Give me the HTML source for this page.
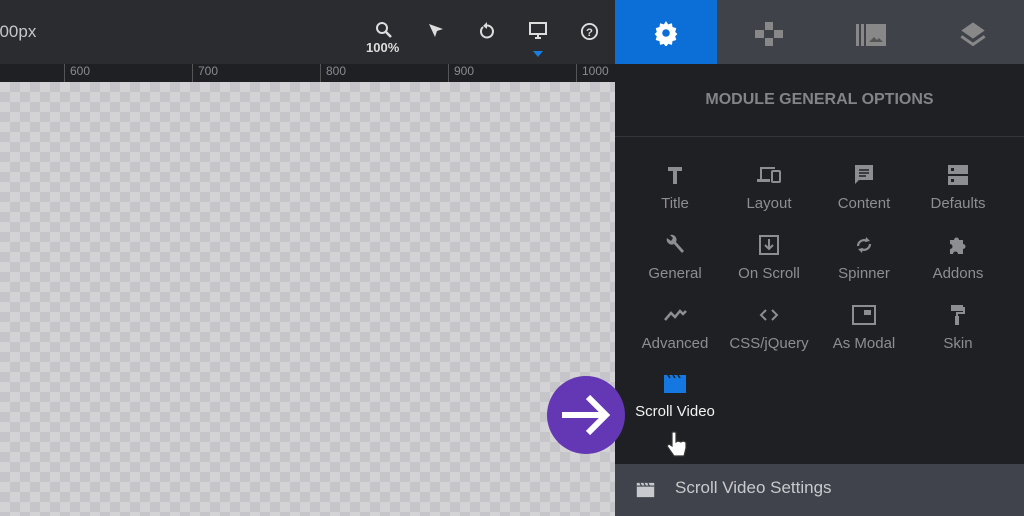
<!DOCTYPE html><html><head><style>
*{margin:0;padding:0;box-sizing:border-box}
body{width:1024px;height:516px;overflow:hidden;background:#1f2023;font-family:"Liberation Sans",sans-serif;position:relative}
.a{position:absolute}
.top{left:0;top:0;width:615px;height:64px;background:#2b2c30}
.ruler{left:0;top:64px;width:615px;height:18px;background:#1f2023;color:#8a8a8e;font-size:12px}
.canvas{left:0;top:82px;width:615px;height:434px;background-color:#d3d3d6;background-image:linear-gradient(45deg,#c6c6ca 25%,transparent 25%,transparent 75%,#c6c6ca 75%),linear-gradient(45deg,#c6c6ca 25%,transparent 25%,transparent 75%,#c6c6ca 75%);background-size:20px 20px;background-position:0 0,10px 10px}
.tabs{left:615px;top:0;width:409px;height:64px;background:#3f4249}
.panel{left:615px;top:64px;width:409px;height:400px;background:#1f2023}
.it{width:94px;text-align:center;color:#8d8e92;font-size:15px}
.it svg{display:block;margin:0 auto 9px}
.bot{left:615px;top:464px;width:409px;height:52px;background:#40434b;color:#c9cacd;font-size:17px}
</style></head><body>
<div class="a top">
 <div class="a" style="left:-10px;top:22px;color:#c7c7ca;font-size:17px">900px</div>
 <svg class="a" style="left:374px;top:20px" width="20" height="20" viewBox="0 0 20 20"><circle cx="8" cy="8" r="5" stroke="#ddd" stroke-width="2" fill="none"/><path d="M12 12l5 5" stroke="#ddd" stroke-width="2.5"/></svg>
 <div class="a" style="left:366px;top:40px;color:#ddd;font-size:13px;font-weight:bold">100%</div>
 <svg class="a" style="left:427px;top:22px" width="18" height="18" viewBox="0 0 18 18"><path d="M2 2l14 5-6 2-2 6z" fill="#ddd"/></svg>
 <svg class="a" style="left:478px;top:22px" width="18" height="18" viewBox="0 0 18 18"><path d="M5 5a6 6 0 1 0 4-1.5" stroke="#ddd" stroke-width="2" fill="none"/><path d="M9 0v7l-4-3z" fill="#ddd"/></svg>
 <svg class="a" style="left:528px;top:21px" width="20" height="20" viewBox="0 0 20 20"><rect x="2" y="2" width="16" height="11" stroke="#ddd" stroke-width="2" fill="none"/><path d="M7 17h6M10 13v4" stroke="#ddd" stroke-width="2"/></svg>
 <div class="a" style="left:533px;top:51px;border:5px solid transparent;border-top:6px solid #1a7ee0"></div>
 <svg class="a" style="left:580px;top:22px" width="19" height="19" viewBox="0 0 20 20"><circle cx="10" cy="10" r="8" stroke="#ddd" stroke-width="2" fill="none"/><text x="10" y="14.5" font-size="12" font-weight="bold" text-anchor="middle" fill="#ddd" font-family="Liberation Sans">?</text></svg>
</div>
<div class="a ruler">
 <div class="a" style="left:64px;top:0;height:18px;border-left:1px solid #555;padding-left:5px">600</div>
 <div class="a" style="left:192px;top:0;height:18px;border-left:1px solid #555;padding-left:5px">700</div>
 <div class="a" style="left:320px;top:0;height:18px;border-left:1px solid #555;padding-left:5px">800</div>
 <div class="a" style="left:448px;top:0;height:18px;border-left:1px solid #555;padding-left:5px">900</div>
 <div class="a" style="left:576px;top:0;height:18px;border-left:1px solid #555;padding-left:5px">1000</div>
</div>
<div class="a canvas"></div>
<div class="a tabs">
 <div class="a" style="left:0;top:0;width:102px;height:64px;background:#0b6fd7"></div>
 <svg class="a" style="left:38px;top:20px" width="26" height="26" viewBox="0 0 24 24"><path d="M12 1l2 3 3.5-1 .5 3.5 3.5 1-1 3.5 2 2-2 2 1 3.5-3.5 1-.5 3.5-3.5-1-2 3-2-3-3.5 1-.5-3.5-3.5-1 1-3.5-2-2 2-2-1-3.5 3.5-1 .5-3.5 3.5 1z" fill="#fff"/><circle cx="12" cy="12" r="3.5" fill="#0b6fd7"/></svg>
 <svg class="a" style="left:140px;top:22px" width="28" height="24" viewBox="0 0 28 24"><g fill="#888"><rect x="10" y="0" width="8" height="8"/><rect x="10" y="16" width="8" height="8"/><rect x="0" y="8" width="9" height="8"/><rect x="19" y="8" width="9" height="8"/></g></svg>
 <svg class="a" style="left:241px;top:24px" width="30" height="22" viewBox="0 0 30 22"><g fill="#888"><rect x="0" y="0" width="3" height="22"/><rect x="5" y="0" width="3" height="22"/><rect x="10" y="0" width="20" height="22"/></g><path d="M13 18l5-5 3 3 2-2 4 4z" fill="#555"/></svg>
 <svg class="a" style="left:344px;top:20px" width="28" height="28" viewBox="0 0 24 24"><path d="M12 2l10 7-10 7-10-7z" fill="#888"/><path d="M2 14l10 7 10-7" stroke="#888" stroke-width="2.5" fill="none"/></svg>
</div>
<div class="a panel">
 <div class="a" style="left:0;top:27px;width:409px;text-align:center;color:#838488;font-size:16px;font-weight:bold">MODULE GENERAL OPTIONS</div>
 <div class="a" style="left:0;top:72px;width:409px;height:1px;background:#34363b"></div>
</div>
<div class="a" style="left:628px;top:164px;width:380px;height:200px">
 <div class="a it" style="left:0;top:0"><svg width="22" height="22" viewBox="0 0 22 22"><path d="M4 3h14v4h-5v13h-4V7H4z" fill="#8d8e92"/></svg>Title</div>
 <div class="a it" style="left:94px;top:0"><svg width="26" height="22" viewBox="0 0 26 22"><path d="M4 3h15v2H6v10h8v3H1v-3h3z" fill="#8d8e92"/><rect x="16" y="7" width="8" height="11" rx="1" stroke="#8d8e92" stroke-width="2" fill="none"/></svg>Layout</div>
 <div class="a it" style="left:189px;top:0"><svg width="22" height="22" viewBox="0 0 22 22"><path d="M2 1h18v15H6l-4 4z" fill="#8d8e92"/><path d="M6 6h10M6 9h10M6 12h7" stroke="#1f2023" stroke-width="1.5"/></svg>Content</div>
 <div class="a it" style="left:283px;top:0"><svg width="22" height="22" viewBox="0 0 22 22"><rect x="1" y="1" width="20" height="9" fill="#8d8e92"/><rect x="1" y="12" width="20" height="9" fill="#8d8e92"/><rect x="4" y="4" width="3" height="3" fill="#1f2023"/><rect x="4" y="15" width="3" height="3" fill="#1f2023"/></svg>Defaults</div>
 <div class="a it" style="left:0;top:70px"><svg width="22" height="22" viewBox="0 0 22 22"><path d="M3 4a5 5 0 0 0 7 6l8 9 2-2-8-9a5 5 0 0 0-6-7l3 3-2 3z" fill="#8d8e92"/></svg>General</div>
 <div class="a it" style="left:94px;top:70px"><svg width="22" height="22" viewBox="0 0 22 22"><rect x="2" y="2" width="18" height="18" stroke="#8d8e92" stroke-width="2" fill="none"/><path d="M11 5v9M7 11l4 4 4-4" stroke="#8d8e92" stroke-width="2" fill="none"/></svg>On Scroll</div>
 <div class="a it" style="left:189px;top:70px"><svg width="22" height="22" viewBox="0 0 22 22"><path d="M5 12a6 6 0 0 1 9-5M17 10a6 6 0 0 1-9 5" stroke="#8d8e92" stroke-width="2.2" fill="none"/><path d="M13 3l4 4-5 1zM9 19l-4-4 5-1z" fill="#8d8e92"/></svg>Spinner</div>
 <div class="a it" style="left:283px;top:70px"><svg width="22" height="22" viewBox="0 0 22 22"><path d="M3 6h4a2.5 2.5 0 0 1 5 0h4v4a2.5 2.5 0 0 1 0 5v5h-5a2.5 2.5 0 0 0-5 0H3v-5a2.5 2.5 0 0 0 0-5z" fill="#8d8e92"/></svg>Addons</div>
 <div class="a it" style="left:0;top:140px"><svg width="24" height="22" viewBox="0 0 24 22"><path d="M2 16l6-7 4 4 5-6 3 3 3-3" stroke="#8d8e92" stroke-width="2.5" fill="none"/></svg>Advanced</div>
 <div class="a it" style="left:94px;top:140px"><svg width="24" height="22" viewBox="0 0 24 22"><path d="M9 6l-5 5 5 5M15 6l5 5-5 5" stroke="#8d8e92" stroke-width="2" fill="none"/></svg>CSS/jQuery</div>
 <div class="a it" style="left:189px;top:140px"><svg width="24" height="22" viewBox="0 0 24 22"><rect x="1" y="2" width="22" height="18" stroke="#8d8e92" stroke-width="2" fill="none"/><rect x="12" y="6" width="7" height="5" fill="#8d8e92"/></svg>As Modal</div>
 <div class="a it" style="left:283px;top:140px"><svg width="22" height="22" viewBox="0 0 22 22"><path d="M4 1h12v6H4z" fill="#8d8e92"/><path d="M17 3v6h-7v3" stroke="#8d8e92" stroke-width="2" fill="none"/><rect x="8" y="12" width="4" height="9" fill="#8d8e92"/></svg>Skin</div>
 <div class="a it" style="left:0;top:210px;color:#f2f2f2"><svg width="24" height="20" viewBox="0 0 24 20"><path d="M1 4h22v15H1z" fill="#1478e0"/><path d="M1 1h22v3H1z" fill="#1478e0"/><path d="M5 1l2 3M10 1l2 3M15 1l2 3" stroke="#1f2023" stroke-width="1.5"/></svg>Scroll Video</div>
</div>
<svg class="a" style="left:546px;top:375px" width="80" height="80" viewBox="0 0 80 80"><circle cx="40" cy="40" r="39" fill="#6437b4"/><path d="M16 40h44M42 22l18 18-18 18" stroke="#fff" stroke-width="6" fill="none"/></svg>
<svg class="a" style="left:666px;top:430px" width="22" height="28" viewBox="0 0 22 28"><path d="M6 2v14l-3-2-2 2 7 10h10l2-8v-6l-3-1-2 1-3-1-2 1V2z" fill="#fff" stroke="#333" stroke-width="1.2"/></svg>
<div class="a bot">
 <svg class="a" style="left:21px;top:18px" width="19" height="16" viewBox="0 0 24 20"><path d="M1 1h22v18H1z" fill="#c9cacd"/><path d="M5 1l2 4M10 1l2 4M15 1l2 4M1 5h22" stroke="#40434b" stroke-width="1.5"/></svg>
 <div class="a" style="left:60px;top:14px">Scroll Video Settings</div>
</div>
</body></html>
